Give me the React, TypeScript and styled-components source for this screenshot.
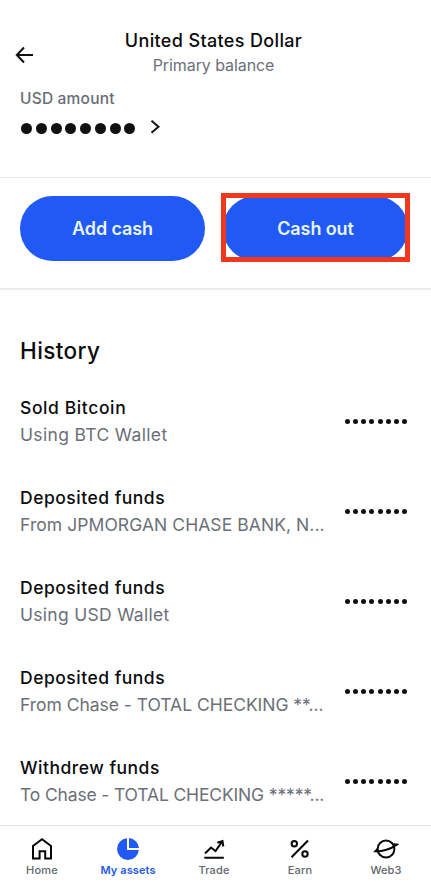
import React from "react";
import styled, { createGlobalStyle } from "styled-components";

const GlobalStyle = createGlobalStyle`
  * { box-sizing: border-box; }
  html, body { margin: 0; padding: 0; background: #fff; }
  body { font-family: Inter, "Liberation Sans", sans-serif; color: #0a0b0d; }
  button { font-family: inherit; border: 0; padding: 0; background: none; color: inherit; }
`;

const Screen = styled.main`
  width: 431px;
  height: 886px;
  display: flex;
  flex-direction: column;
  background: #fff;
  overflow: hidden;
`;

const Top = styled.section`
  flex: none;
  height: 178px;
  border-bottom: 1px solid #e6e7e9;
`;

const Header = styled.header`
  display: grid;
  grid-template-columns: 48px 1fr 52px;
  height: 89px;
  padding-top: 28px;
`;

const BackButton = styled.button`
  display: flex;
  align-items: flex-start;
  padding: 17px 0 0 15px;
`;

const Titles = styled.div`
  text-align: center;
  white-space: nowrap;
`;

const Title = styled.h1`
  margin: 0;
  font-size: 18px;
  line-height: 25px;
  font-weight: 550;
  letter-spacing: 0.35px;
`;

const Subtitle = styled.div`
  font-size: 16px;
  line-height: 25px;
  letter-spacing: -0.08px;
  color: #6c707a;
`;

const Balance = styled.div`
  padding: 0 20px;
`;

const BalanceLabel = styled.div`
  font-size: 15.5px;
  line-height: 20px;
  font-weight: 500;
  letter-spacing: 0.2px;
  color: #696d77;
`;

const BalanceValue = styled.div`
  display: flex;
  align-items: center;
  height: 20px;
  margin-top: 9px;
  padding-left: 1px;
  gap: 15px;
`;

const DotRow = styled.div<{ $size: number; $gap: number }>`
  display: flex;
  flex: none;
  gap: ${(p) => p.$gap}px;

  i {
    width: ${(p) => p.$size}px;
    height: ${(p) => p.$size}px;
    border-radius: 50%;
    background: #101012;
  }
`;

const Actions = styled.section`
  display: flex;
  flex: none;
  gap: 16px;
  height: 112px;
  padding: 15px 0 0 20px;
  border-bottom: 2px solid #ececee;
`;

const Pill = styled.button`
  width: 185px;
  height: 65px;
  margin-top: 3px;
  border-radius: 33px;
  background: #2159f5;
  color: #e6f5ff;
  font-size: 18px;
  font-weight: 600;
  letter-spacing: -0.1px;
`;

const Highlight = styled.div`
  display: flex;
  align-items: center;
  justify-content: center;
  width: 189px;
  height: 69px;
  padding-top: 2px;
  border: 5px solid #f2371f;
  overflow: hidden;

  ${Pill} {
    flex: none;
    margin: 0;
  }
`;

const History = styled.section`
  flex: 1;
  min-height: 0;
  padding: 47px 24px 0 20px;
`;

const Heading = styled.h2`
  margin: 0 0 29px;
  font-size: 22.5px;
  line-height: 28px;
  font-weight: 550;
  letter-spacing: 0.4px;
`;

const Row = styled.div`
  display: flex;
  align-items: center;
  justify-content: space-between;
  height: 54px;
  margin-bottom: 36px;
`;

const RowText = styled.div`
  white-space: nowrap;
  font-size: 17.5px;
  line-height: 27px;
`;

const RowTitle = styled.div<{ $track: number }>`
  font-weight: 550;
  letter-spacing: ${(p) => p.$track}px;
`;

const RowDetail = styled.div<{ $track: number }>`
  color: #6c6f78;
  letter-spacing: ${(p) => p.$track}px;
`;

const TabBar = styled.nav`
  display: grid;
  flex: none;
  grid-template-columns: repeat(5, 86px);
  height: 61px;
  padding-top: 10px;
  border-top: 1px solid #dfe0e3;
`;

const Tab = styled.button<{ $active?: boolean; $track: number }>`
  display: flex;
  flex-direction: column;
  align-items: center;
  padding-right: 2px;
  font-size: 11px;
  line-height: 16px;
  font-weight: ${(p) => (p.$active ? 600 : 500)};
  letter-spacing: ${(p) => p.$track}px;
  color: ${(p) => (p.$active ? "#2459e6" : "#62656e")};

  svg { color: ${(p) => (p.$active ? "#2159f5" : "#08080a")}; }
`;

const Dots = ({ size, gap }: { size: number; gap: number }) => (
  <DotRow $size={size} $gap={gap}>
    {Array.from({ length: 8 }, (_, i) => <i key={i} />)}
  </DotRow>
);

const Icon = ({ children }: { children: React.ReactNode }) => (
  <svg width="26" height="26" viewBox="0 0 26 26" fill="none" stroke="currentColor" strokeWidth="2">
    {children}
  </svg>
);

const rows = [
  { title: "Sold Bitcoin", detail: "Using BTC Wallet", tt: 0.6, dt: 0.34 },
  { title: "Deposited funds", detail: "From JPMORGAN CHASE BANK, N...", tt: 0.5, dt: 0.07 },
  { title: "Deposited funds", detail: "Using USD Wallet", tt: 0.5, dt: 0.29 },
  { title: "Deposited funds", detail: "From Chase - TOTAL CHECKING **...", tt: 0.5, dt: -0.03 },
  { title: "Withdrew funds", detail: "To Chase - TOTAL CHECKING *****...", tt: 0.5, dt: -0.15 },
];

const tabs = [
  { label: "Home", track: 0.2, icon: <path d="M4 22.500V10L13 3.300l9 6.700v12.500h-5.800v-7.300H10.600v7.300z" /> },
  {
    label: "My assets",
    track: 0.1,
    active: true,
    icon: (
      <g fill="currentColor" stroke="none">
        <path d="M12 2.200A10.900 10.900 0 1 0 23.800 14H12z" />
        <path d="M14 2a11 11 0 0 1 10 10H14z" />
      </g>
    ),
  },
  {
    label: "Trade",
    track: 0.15,
    icon: <path d="M3.300 21.700h19.500M4 17.500l6-6 4.500 3.600L21 5.700M16.300 6.800l5.200-1.700.8 5.400" />,
  },
  {
    label: "Earn",
    track: 0.1,
    icon: (
      <>
        <circle cx="7.300" cy="7.700" r="2.700" />
        <circle cx="18" cy="18" r="2.700" />
        <path d="M21 4.500L4.500 21.300" />
      </>
    ),
  },
  {
    label: "Web3",
    track: 0.1,
    icon: (
      <>
        <circle cx="13" cy="13" r="8.400" />
        <path d="M5 12.500L2.300 15.300C9 15.700 18 13 23.800 8.600L20.300 8.200" />
      </>
    ),
  },
];

export default function App() {
  return (
    <>
      <GlobalStyle />
      <Screen>
        <Top>
          <Header>
            <BackButton aria-label="Back">
              <svg width="20" height="20" viewBox="0 0 20 20" fill="none" stroke="#111114" strokeWidth="2">
                <path d="M18 10H2M9 2.500L1.800 10 9 17.500" />
              </svg>
            </BackButton>
            <Titles>
              <Title>United States Dollar</Title>
              <Subtitle>Primary balance</Subtitle>
            </Titles>
          </Header>
          <Balance>
            <BalanceLabel>USD amount</BalanceLabel>
            <BalanceValue>
              <Dots size={11} gap={3.75} />
              <svg width="12" height="16" viewBox="0 0 12 16" fill="none" stroke="#111114" strokeWidth="2">
                <path d="M1.500 .8l7 6-7 6" />
              </svg>
            </BalanceValue>
          </Balance>
        </Top>
        <Actions>
          <Pill>Add cash</Pill>
          <Highlight>
            <Pill>Cash out</Pill>
          </Highlight>
        </Actions>
        <History>
          <Heading>History</Heading>
          {rows.map((r) => (
            <Row key={r.detail}>
              <RowText>
                <RowTitle $track={r.tt}>{r.title}</RowTitle>
                <RowDetail $track={r.dt}>{r.detail}</RowDetail>
              </RowText>
              <Dots size={5} gap={3.17} />
            </Row>
          ))}
        </History>
        <TabBar>
          {tabs.map((t) => (
            <Tab key={t.label} $active={t.active} $track={t.track}>
              <Icon>{t.icon}</Icon>
              {t.label}
            </Tab>
          ))}
        </TabBar>
      </Screen>
    </>
  );
}
